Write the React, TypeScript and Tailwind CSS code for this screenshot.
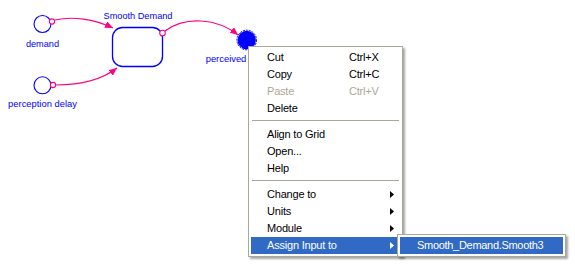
import React from "react";

type Item =
  | { kind: "item"; label: string; shortcut?: string; disabled?: boolean; sub?: boolean; active?: boolean }
  | { kind: "sep" };

const items: Item[] = [
  { kind: "item", label: "Cut", shortcut: "Ctrl+X" },
  { kind: "item", label: "Copy", shortcut: "Ctrl+C" },
  { kind: "item", label: "Paste", shortcut: "Ctrl+V", disabled: true },
  { kind: "item", label: "Delete" },
  { kind: "sep" },
  { kind: "item", label: "Align to Grid" },
  { kind: "item", label: "Open..." },
  { kind: "item", label: "Help" },
  { kind: "sep" },
  { kind: "item", label: "Change to", sub: true },
  { kind: "item", label: "Units", sub: true },
  { kind: "item", label: "Module", sub: true },
  { kind: "item", label: "Assign Input to", sub: true, active: true },
];

function Arrow({ color }: { color: string }) {
  return (
    <svg width="4" height="7" viewBox="0 0 4 7" className="block">
      <path d="M0 0 L4 3.5 L0 7 Z" fill={color} />
    </svg>
  );
}

function Diagram() {
  const blue = "#0000ff";
  const pink = "#ff0080";
  return (
    <svg width="575" height="270" className="absolute left-0 top-0" style={{ fontFamily: "'Liberation Sans', Arial, sans-serif" }}>
      <defs>
        <marker id="ah" markerUnits="userSpaceOnUse" markerWidth="8" markerHeight="7" refX="8" refY="3.5" orient="auto">
          <path d="M0 0 L8 3.5 L0 7 Z" fill={pink} />
        </marker>
        <clipPath id="lbl">
          <rect x="0" y="0" width="248" height="270" />
        </clipPath>
      </defs>
      {/* connectors */}
      <path d="M55 20 C72 16 94 19 113 28" fill="none" stroke={pink} strokeWidth="1.2" markerEnd="url(#ah)" />
      <path d="M165 31 C185 16 217 18 238 35" fill="none" stroke={pink} strokeWidth="1.2" markerEnd="url(#ah)" />
      <path d="M56 85 C80 85 100 81 117 68" fill="none" stroke={pink} strokeWidth="1.2" markerEnd="url(#ah)" />

      {/* demand */}
      <circle cx="42.5" cy="24" r="8.5" fill="white" stroke={blue} strokeWidth="1.1" />
      <circle cx="52" cy="21.5" r="2.6" fill="white" stroke={pink} strokeWidth="1.1" />
      <text x="42.5" y="47" textAnchor="middle" fontSize="9.2" fill={blue}>demand</text>

      {/* perception delay */}
      <circle cx="42.5" cy="85.3" r="8.5" fill="white" stroke={blue} strokeWidth="1.1" />
      <circle cx="53" cy="85" r="2.6" fill="white" stroke={pink} strokeWidth="1.1" />
      <text x="42.5" y="107" textAnchor="middle" fontSize="9.4" fill={blue}>perception delay</text>

      {/* Smooth Demand module */}
      <rect x="112.5" y="27.5" width="50" height="39" rx="10" ry="10" fill="white" stroke={blue} strokeWidth="1.3" />
      <circle cx="162.5" cy="33" r="2.8" fill="white" stroke={pink} strokeWidth="1.1" />
      <text x="138" y="19" textAnchor="middle" fontSize="9.2" fill={blue}>Smooth Demand</text>

      {/* perceived (selected) */}
      <circle cx="246.7" cy="40" r="9.2" fill={blue} />
      <circle cx="246.7" cy="40" r="9.8" fill="none" stroke={blue} strokeWidth="1" strokeDasharray="2 1" />
      <text x="205.7" y="62" fontSize="9.4" fill={blue} clipPath="url(#lbl)">perceived</text>
    </svg>
  );
}

export default function App() {
  return (
    <div className="relative h-[270px] w-[575px] overflow-hidden bg-white font-['Liberation_Sans',Arial,sans-serif] text-[11px]">
      <Diagram />

      {/* main context menu */}
      <div className="absolute left-[248px] top-[46px] w-[155px] border border-[#aca899] bg-white p-[2px] tracking-[-0.2px] shadow-[2px_2px_2px_rgba(0,0,0,0.35)]">
        {items.map((it, i) =>
          it.kind === "sep" ? (
            <div key={i} className="h-[9px] px-[1px] pt-[3px]">
              <div className="h-px bg-[#aca899]" />
            </div>
          ) : (
            <div
              key={i}
              className={
                "flex h-[17px] items-center leading-[17px] " +
                (it.active ? "bg-[#316ac5] text-white" : it.disabled ? "text-[#aca899]" : "text-black")
              }
            >
              <span className="w-[98px] shrink-0 pl-[16px] whitespace-nowrap">{it.label}</span>
              <span className="whitespace-nowrap">{it.shortcut ?? ""}</span>
              {it.sub ? (
                <span className="ml-auto mr-[6px]">
                  <Arrow color={it.active ? "#ffffff" : "#000000"} />
                </span>
              ) : null}
            </div>
          )
        )}
      </div>

      {/* submenu */}
      <div className="absolute left-[397px] top-[234px] w-[169px] border border-[#aca899] bg-white p-[2px] shadow-[2px_2px_2px_rgba(0,0,0,0.35)]">
        <div className="flex h-[17px] items-center bg-[#316ac5] pl-[17px] leading-[17px] tracking-[-0.3px] text-white whitespace-nowrap">
          Smooth_Demand.Smooth3
        </div>
      </div>
    </div>
  );
}
